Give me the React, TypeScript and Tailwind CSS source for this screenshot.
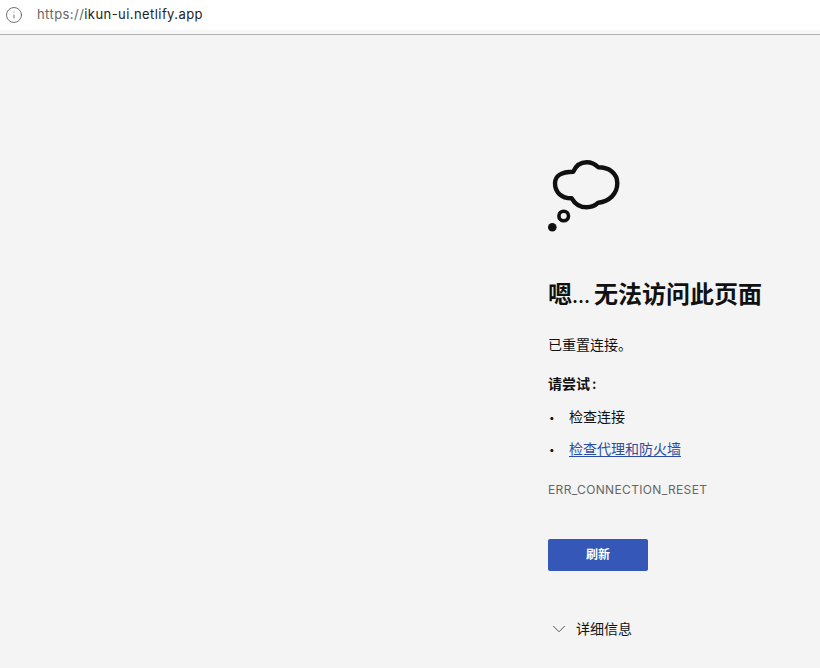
import { ChevronDown, Info } from 'lucide-react';

const FONT = "font-['Inter','Liberation_Sans','Noto_Sans_CJK_SC',sans-serif]";

function ThoughtCloud() {
  return (
    <svg width="74" height="74" viewBox="0 0 74 74" fill="none" className="block">
      <path
        d="M25.3 11.7C28 5.5 33 2.3 38.7 2.3C43 2.3 47 4 50.3 7.3C61 7.3 69.3 13 69.3 23.3C69.3 34 61 41.5 50.3 42.7C47 45.8 43 47.3 38.7 47.3C32 47.3 27 44 23.7 38.3C13 38.3 7 32 7 23.3C7 16 13 11.7 25.3 11.7Z"
        stroke="#101010"
        strokeWidth="4.4"
        strokeLinejoin="round"
      />
      <circle cx="15.7" cy="56" r="4.8" stroke="#101010" strokeWidth="3.6" />
      <circle cx="4.3" cy="67.3" r="4.3" fill="#101010" />
    </svg>
  );
}

export default function App() {
  return (
    <div className={`${FONT} h-[668px] overflow-hidden bg-[#f4f4f4] text-[#111]`}>
      {/* address bar */}
      <div className="flex items-center h-[30px] bg-white pl-[5px]">
        <Info size={18} strokeWidth={1.1} className="text-[#555]" />
        <span className="ml-[14px] text-[13px] tracking-[0.43px] text-[#666]">
          https://<span className="text-[#222]">ikun-ui.netlify.app</span>
        </span>
      </div>
      <div className="h-[5px] bg-[#f7f7f7] border-b border-[#b5b5b5]" />

      <div className="pl-[548px] pt-[125px]">
        <ThoughtCloud />
        <h1 className="mt-[45px] h-[32px] text-[24px] leading-[32px] font-bold whitespace-nowrap">
          嗯<span className="inline-block w-[22px] text-[18px] leading-[18px]">…</span>无法访问此页面
        </h1>
        <p className="mt-[24px] text-[14px] leading-[20px]">已重置连接。</p>
        <p className="mt-[19px] text-[14px] leading-[20px] font-semibold">
          请尝试<span className="pl-[2px]">:</span>
        </p>
        <ul className="mt-[13px] text-[14px] leading-[20px]">
          <li className="flex items-center">
            <span className="w-[21px] text-[10px] pl-[1px]">•</span>
            <span>检查连接</span>
          </li>
          <li className="flex items-center mt-[12px]">
            <span className="w-[21px] text-[10px] pl-[1px]">•</span>
            <a className="text-[#2b4ea3] underline underline-offset-2">检查代理和防火墙</a>
          </li>
        </ul>
        <p className="mt-[23px] text-[12px] leading-[16px] text-[#666] tracking-[0.35px]">ERR_CONNECTION_RESET</p>
        <button className="block mt-[41px] w-[100px] h-[32px] rounded-[2px] bg-[#3558b8] text-white text-[12px] font-semibold">
          刷新
        </button>
        <div className="flex items-center mt-[47px] text-[14px] leading-[20px]">
          <ChevronDown size={22} strokeWidth={1} className="text-[#444]" />
          <span className="ml-[6px]">详细信息</span>
        </div>
      </div>
    </div>
  );
}
